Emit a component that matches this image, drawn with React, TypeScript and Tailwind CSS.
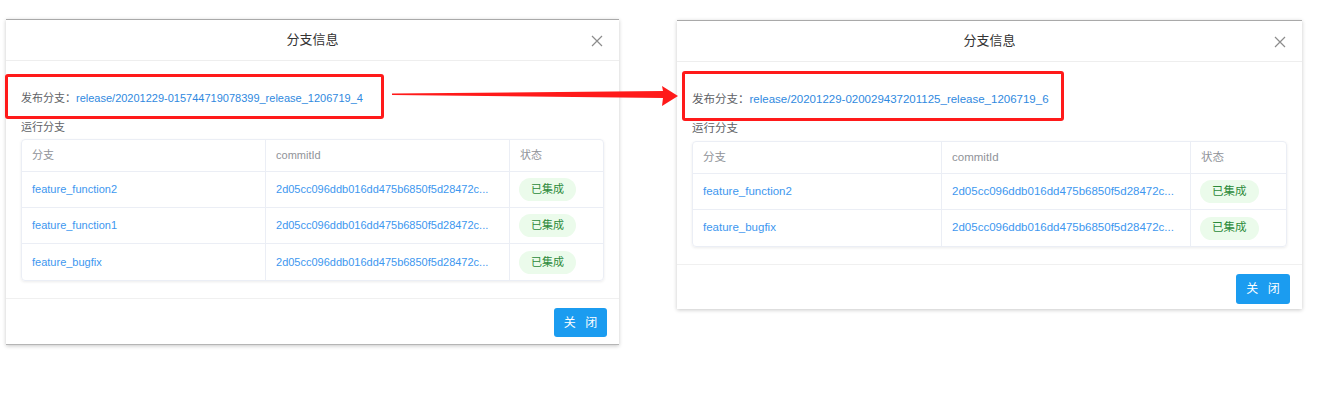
import React from 'react'

type Row = { branch: string; commit: string }

type DialogProps = {
  release: string
  rows: Row[]
  className: string
  redBoxClass: string
  tableMt: string
  footerClass: string
  btnClass: string
}

const COMMIT = '2d05cc096ddb016dd475b6850f5d28472c...'

function CloseIcon() {
  return (
    <svg width="12" height="12" viewBox="0 0 12 12" fill="none">
      <path d="M1 1L11 11M11 1L1 11" stroke="#8c8c8c" strokeWidth="1.2" />
    </svg>
  )
}

function BranchDialog({ release, rows, className, redBoxClass, tableMt, footerClass, btnClass }: DialogProps) {
  return (
    <div
      className={`relative bg-white border-t border-t-[#a9a9a9] shadow-[0_1px_4px_rgba(0,0,0,0.22)] ${className}`}
    >
      {/* header */}
      <div className="relative h-[41px] flex items-center justify-center border-b border-[#eeeeee]">
        <span className="text-[13px] text-[#333]">分支信息</span>
        <span className="absolute right-[16px] top-[15px]">
          <CloseIcon />
        </span>
      </div>

      {/* body */}
      <div className="pt-[27px] pb-[17px] px-[15px]">
        <div className="h-[20px] leading-[20px] text-[#606266]">
          发布分支：<span className="text-[#2f89e0]">{release}</span>
        </div>
        <div className="mt-[9px] h-[20px] leading-[20px] text-[#606266]">运行分支</div>
        <div
          className={`${tableMt} border border-[#ebeef5] rounded-[4px] shadow-[0_1px_3px_rgba(0,0,0,0.08)] overflow-hidden`}
        >
          <div className="grid grid-cols-[42%_42%_16%] h-[32px] border-b border-[#ebeef5] text-[#909399]">
            <div className="flex items-center pl-[10px] border-r border-[#ebeef5]">分支</div>
            <div className="flex items-center pl-[10px] border-r border-[#ebeef5]">commitId</div>
            <div className="flex items-center pl-[10px]">状态</div>
          </div>
          {rows.map((r, i) => (
            <div
              key={i}
              className={`grid grid-cols-[42%_42%_16%] h-[36px] text-[#3d97ef] ${
                i < rows.length - 1 ? 'border-b border-[#ebeef5]' : ''
              }`}
            >
              <div className="flex items-center pl-[10px] border-r border-[#ebeef5]">{r.branch}</div>
              <div className="flex items-center pl-[10px] border-r border-[#ebeef5] whitespace-nowrap overflow-hidden">
                {r.commit}
              </div>
              <div className="flex items-center pl-[9px]">
                <span className="h-[23px] px-[12px] rounded-full bg-[#ebfbeb] text-[#2b8a3a] flex items-center">
                  已集成
                </span>
              </div>
            </div>
          ))}
        </div>
      </div>

      {/* footer */}
      <div className={`flex justify-end border-t border-[#f0f0f0] pt-[9px] pr-[12px] ${footerClass}`}>
        <button
          className={`bg-[#1b9cf0] text-white text-[12px] rounded-[3px] tracking-[3px] pl-[3px] ${btnClass}`}
        >
          关 闭
        </button>
      </div>

      {/* annotation */}
      <div className={`absolute border-[3px] border-[#ff1a1a] rounded-[3px] ${redBoxClass}`} />
    </div>
  )
}

export default function App() {
  return (
    <div
      className="relative w-[1321px] h-[397px] bg-white overflow-hidden"
      style={{ fontFamily: '"Liberation Sans", "Noto Sans CJK SC", sans-serif' }}
    >
      <div className="flex items-start pl-[6px] pt-[19px] gap-[58px]">
        <BranchDialog
          className="w-[613px] text-[11px] border-b border-b-[#b5b5b5]"
          release="release/20201229-015744719078399_release_1206719_4"
          rows={[
            { branch: 'feature_function2', commit: COMMIT },
            { branch: 'feature_function1', commit: COMMIT },
            { branch: 'feature_bugfix', commit: COMMIT },
          ]}
          redBoxClass="left-[-1px] top-[54px] w-[379px] h-[45px]"
          tableMt="mt-[2px]"
          footerClass="pb-[7px]"
          btnClass="w-[53px] h-[29px]"
        />
        <BranchDialog
          className="w-[625px] text-[11.5px] mt-[1px]"
          release="release/20201229-020029437201125_release_1206719_6"
          rows={[
            { branch: 'feature_function2', commit: COMMIT },
            { branch: 'feature_bugfix', commit: COMMIT },
          ]}
          redBoxClass="left-[5px] top-[50px] w-[382px] h-[50px]"
          tableMt="mt-[3px]"
          footerClass="pb-[5px]"
          btnClass="w-[54px] h-[30px]"
        />
      </div>

      {/* arrow between the two dialogs */}
      <svg className="absolute left-0 top-0 pointer-events-none" width="1321" height="397">
        <polygon
          points="392,93.6 663,91 662,86 678,96 662,106 663,98 392,95"
          fill="#ff1a1a"
        />
      </svg>
    </div>
  )
}
